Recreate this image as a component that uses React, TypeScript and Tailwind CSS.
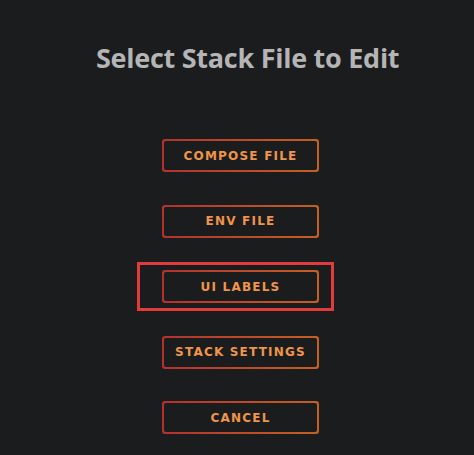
const buttons = ["COMPOSE FILE", "ENV FILE", "UI LABELS", "STACK SETTINGS", "CANCEL"];

const StackButton = ({ label }: { label: string }) => (
  <div className="w-[157px] h-[33px] rounded-[3px] p-[2px] bg-gradient-to-r from-[#b3302f] to-[#c4601f]">
    <div className="w-full h-full rounded-[2px] bg-[#1b1c1e] flex items-center justify-center">
      <span className="font-['DejaVu_Sans',sans-serif] font-bold text-[12px] tracking-[0.1em] text-[#f0954a]">
        {label}
      </span>
    </div>
  </div>
);

export default function App() {
  return (
    <div className="w-[474px] h-[455px] bg-[#1b1c1e] flex flex-col items-start">
      <h1 className="ml-[96px] mt-[41px] font-['Open_Sans',sans-serif] font-bold text-[27px] leading-[34px] text-[#b5b5b5] tracking-[-0.01em]">
        Select Stack File to Edit
      </h1>
      <div className="ml-[162px] mt-[64px] flex flex-col items-start gap-[32.5px]">
        {buttons.map((b) =>
          b === "UI LABELS" ? (
            <div key={b} className="relative">
              <StackButton label={b} />
              {/* highlight annotation */}
              <span className="absolute -left-[25px] -right-[15px] -top-[8px] -bottom-[8px] border-[3px] border-[#e23b3b] pointer-events-none" />
            </div>
          ) : (
            <StackButton key={b} label={b} />
          )
        )}
      </div>
    </div>
  );
}
